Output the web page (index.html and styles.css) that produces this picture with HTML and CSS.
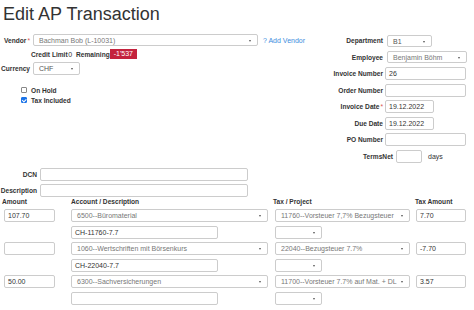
FILE: index.html
```html
<!DOCTYPE html>
<html lang="en">

<head>
    <meta charset="UTF-8">
    <meta name="viewport" content="width=device-width, initial-scale=1.0">
    <title>Edit AP Transaction</title>
    <link rel="stylesheet" href="styles.css">
</head>

<body>
    <div class="page">
        <h1 class="title">Edit AP Transaction</h1>

        <div class="top">
            <div class="left">
                <div class="row vendor-row">
                    <div class="lbl lbl-left">Vendor<span class="req">*</span></div>
                    <div class="select vendor-select">Bachman Bob (L-10031)</div>
                    <a class="link" href="#">? Add Vendor</a>
                </div>
                <div class="credit">
                    <span class="bold">Credit Limit</span><span class="num">0</span>
                    <span class="bold remaining">Remaining</span><span class="badge">-1'537</span>
                </div>
                <div class="row currency-row">
                    <div class="lbl lbl-left">Currency</div>
                    <div class="select currency-select">CHF</div>
                </div>
                <div class="checks">
                    <div class="check"><span class="cb"></span><span class="bold">On Hold</span></div>
                    <div class="check"><span class="cb checked"></span><span class="bold">Tax Included</span></div>
                </div>
            </div>

            <div class="right">
                <div class="row">
                    <div class="lbl lbl-right">Department</div>
                    <div class="select dept-select">B1</div>
                </div>
                <div class="row">
                    <div class="lbl lbl-right">Employee</div>
                    <div class="select emp-select">Benjamin Böhm</div>
                </div>
                <div class="row">
                    <div class="lbl lbl-right">Invoice Number</div>
                    <div class="input wide">26</div>
                </div>
                <div class="row">
                    <div class="lbl lbl-right">Order Number</div>
                    <div class="input wide"></div>
                </div>
                <div class="row">
                    <div class="lbl lbl-right">Invoice Date<span class="req">*</span></div>
                    <div class="input date">19.12.2022</div>
                </div>
                <div class="row">
                    <div class="lbl lbl-right">Due Date</div>
                    <div class="input date">19.12.2022</div>
                </div>
                <div class="row">
                    <div class="lbl lbl-right">PO Number</div>
                    <div class="input wide"></div>
                </div>
                <div class="row terms-row">
                    <div class="lbl terms-lbl">TermsNet</div>
                    <div class="input terms"></div>
                    <span class="days">days</span>
                </div>
            </div>
        </div>

        <div class="meta">
            <div class="row">
                <div class="lbl lbl-meta">DCN</div>
                <div class="input meta-input"></div>
            </div>
            <div class="row">
                <div class="lbl lbl-meta">Description</div>
                <div class="input meta-input"></div>
            </div>
        </div>

        <div class="lines">
            <div class="head head-amount">Amount</div>
            <div class="head">Account / Description</div>
            <div class="head head-tax">Tax / Project</div>
            <div class="head head-taxamt">Tax Amount</div>

            <div class="input amount">107.70</div>
            <div class="select account">6500--Büromaterial</div>
            <div class="select tax">11760--Vorsteuer 7,7% Bezugsteuer</div>
            <div class="input taxamt">7.70</div>
            <div></div>
            <div class="input desc">CH-11760-7.7</div>
            <div class="select project"></div>
            <div></div>

            <div class="input amount"></div>
            <div class="select account">1060--Wertschriften mit Börsenkurs</div>
            <div class="select tax">22040--Bezugsteuer 7.7%</div>
            <div class="input taxamt">-7.70</div>
            <div></div>
            <div class="input desc">CH-22040-7.7</div>
            <div class="select project"></div>
            <div></div>

            <div class="input amount">50.00</div>
            <div class="select account">6300--Sachversicherungen</div>
            <div class="select tax">11700--Vorsteuer 7.7% auf Mat. + DL</div>
            <div class="input taxamt">3.57</div>
            <div></div>
            <div class="input desc"></div>
            <div class="select project"></div>
            <div></div>
        </div>
    </div>
</body>

</html>
```

FILE: styles.css
```css
body {
    margin: 0;
    background: #fff;
    font-family: "Liberation Sans", Arial, sans-serif;
    font-size: 7px;
    color: #333;
}

.page {
    width: 474px;
    height: 310px;
    overflow: hidden;
}

.title {
    margin: 3px 0 0 3px;
    font-size: 18px;
    line-height: 22px;
    font-weight: normal;
    color: #333;
}

.top {
    display: flex;
    margin-top: 9px;
}

.left {
    width: 330px;
}

.row {
    display: flex;
    align-items: center;
}

.lbl,
.bold,
.lines .head {
    font-weight: bold;
    font-size: 6.6px;
    color: #333;
    white-space: nowrap;
}

.req {
    color: #d9534f;
    font-weight: normal;
    margin-left: 1px;
}

.lbl-left {
    width: 30px;
    text-align: right;
}

.select,
.input {
    box-sizing: border-box;
    height: 13px;
    line-height: 11px;
    border: 1px solid #ccc;
    border-radius: 2px;
    background: #fff;
    padding-left: 3px;
    white-space: nowrap;
    overflow: hidden;
}

.input {
    color: #333;
}

.select {
    position: relative;
    color: #777;
    padding-left: 5px;
}

.select::after {
    content: "";
    position: absolute;
    right: 6px;
    top: 5px;
    border-left: 1.5px solid transparent;
    border-right: 1.5px solid transparent;
    border-top: 2px solid #555;
}

.vendor-row .select {
    height: 12px;
}

.vendor-select {
    width: 225px;
    margin-left: 3px;
}

.link {
    margin-left: 5px;
    color: #3c8dde;
    text-decoration: none;
}

.credit {
    display: flex;
    align-items: center;
    height: 10px;
    margin-top: 3px;
    padding-left: 31px;
}

.num {
    margin-left: 0.5px;
}

.remaining {
    margin-left: 4px;
}

.badge {
    height: 10px;
    line-height: 10px;
    padding: 0 4px;
    background: #c4223d;
    color: #fff;
}

.currency-row {
    margin-top: 3px;
}

.currency-select {
    width: 47px;
    margin-left: 3px;
    color: #555;
}

.checks {
    margin-top: 11px;
    padding-left: 21px;
}

.check {
    display: flex;
    align-items: center;
    height: 8px;
    margin-bottom: 2px;
}

.cb {
    box-sizing: border-box;
    width: 6px;
    height: 6px;
    border: 1px solid #888;
    border-radius: 1px;
    margin-right: 4px;
    background: #fff;
}

.cb.checked {
    border-color: #1a73e8;
    background: #1a73e8;
    position: relative;
}

.cb.checked::after {
    content: "";
    position: absolute;
    left: 1px;
    top: 0;
    width: 1.5px;
    height: 2.5px;
    border: solid #fff;
    border-width: 0 1px 1px 0;
    transform: rotate(45deg);
}

.right {
    display: flex;
    flex-direction: column;
    gap: 3.5px;
}

.right .row {
    height: 13px;
}

.lbl-right {
    width: 53px;
    margin-right: 3px;
    text-align: right;
}

.dept-select {
    width: 45px;
    height: 12px;
    margin-left: 1px;
    color: #555;
}

.emp-select {
    width: 80px;
    height: 12px;
    margin-left: 1px;
}

.wide {
    width: 81px;
    margin-left: -1px;
}

.date {
    width: 49px;
    margin-left: -1px;
}

.terms-lbl {
    width: 63px;
    text-align: right;
}

.terms {
    width: 26px;
    margin-left: 3px;
}

.days {
    margin-left: 6px;
    color: #333;
}

.meta {
    display: flex;
    flex-direction: column;
    gap: 3px;
    margin-top: 5px;
}

.meta .row {
    height: 13px;
}

.lbl-meta {
    width: 37px;
    text-align: right;
    margin-right: 3px;
}

.meta-input {
    width: 208px;
}

.lines {
    display: grid;
    grid-template-columns: 71px 204px 141px 58px;
    grid-template-rows: 8px repeat(6, 13px);
    row-gap: 3.6px;
    margin-top: 1px;
}

.lines .head {
    line-height: 8px;
    margin-bottom: -3.6px;
}

.head-amount {
    margin-left: 2px;
}

.head-tax {
    margin-left: -2px;
}

.head-taxamt {
    margin-left: -1px;
}

.amount {
    width: 51px;
    margin-left: 4px;
}

.account {
    width: 197px;
}

.tax {
    width: 135px;
}

.taxamt {
    width: 50px;
}

.desc {
    width: 147px;
}

.project {
    width: 47px;
}
```
